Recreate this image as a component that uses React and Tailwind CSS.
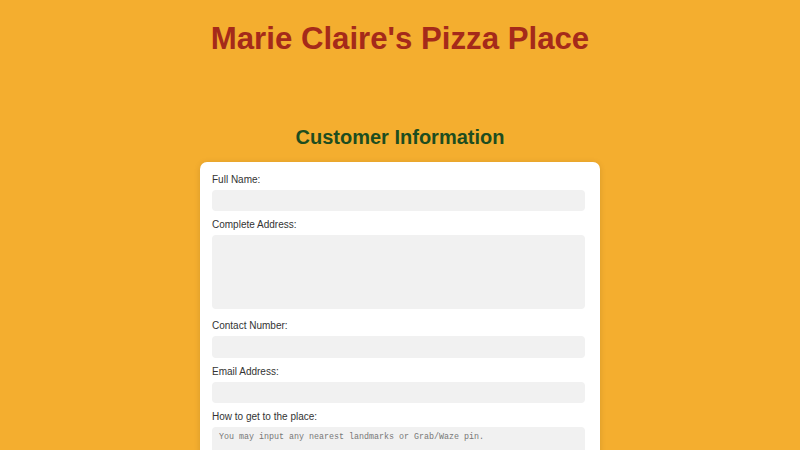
import React from "react";

function Field({ label, children }) {
  return (
    <div>
      <label className="block text-[10px] leading-[12px] text-[#333333] mb-[4px]">{label}</label>
      {children}
    </div>
  );
}

export default function App() {
  const inputCls =
    "block w-[373px] h-[21.5px] bg-[#f1f1f1] rounded-[4px] border-0 outline-none mb-[8px]";
  return (
    <div
      className="w-[800px] h-[450px] overflow-hidden bg-[#f4ae2f] flex flex-col items-center"
      style={{ fontFamily: '"Liberation Sans", Arial, sans-serif' }}
    >
      <h1 className="mt-[20.5px] text-[31.2px] leading-[36px] font-bold text-[#a52a1a]">
        Marie Claire's Pizza Place
      </h1>
      <h2 className="mt-[68px] text-[20px] leading-[24px] font-bold text-[#1d4d1f]">
        Customer Information
      </h2>
      <div className="mt-[13.5px] w-[400px] bg-white rounded-[7px] shadow-[0_1px_6px_rgba(0,0,0,0.12)] pl-[12px] pt-[11.5px] pb-4">
        <Field label="Full Name:">
          <input type="text" className={inputCls} />
        </Field>
        <Field label="Complete Address:">
          <textarea className="block w-[373px] h-[74px] bg-[#f1f1f1] rounded-[4px] border-0 outline-none resize-none mb-[11px]" />
        </Field>
        <Field label="Contact Number:">
          <input type="text" className={inputCls} />
        </Field>
        <Field label="Email Address:">
          <input type="email" className={inputCls} />
        </Field>
        <Field label="How to get to the place:">
          <textarea
            placeholder="You may input any nearest landmarks or Grab/Waze pin."
            className="block w-[373px] h-[74px] bg-[#f1f1f1] rounded-[4px] border-0 outline-none resize-none pl-[7px] pt-[5px] text-[8.33px] leading-[10px] placeholder:text-[#777777]"
            style={{ fontFamily: '"Liberation Mono", "Courier New", monospace' }}
          />
        </Field>
      </div>
    </div>
  );
}
